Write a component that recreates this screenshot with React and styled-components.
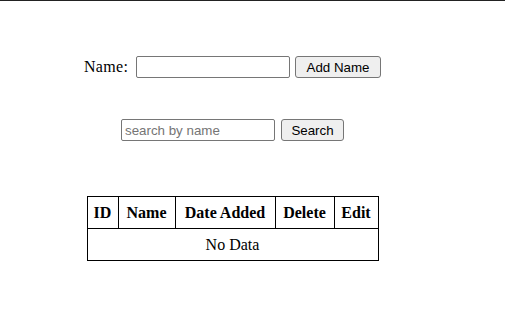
import styled, { createGlobalStyle } from "styled-components";

const GlobalStyle = createGlobalStyle`
  html, body {
    margin: 0;
    padding: 0;
    background: #fff;
  }
  body {
    border-top: 1px solid #222;
    font-family: "Liberation Serif", "Times New Roman", serif;
    font-size: 16px;
    color: #000;
  }
`;

const Page = styled.div`
  width: 465px;
  display: flex;
  flex-direction: column;
  align-items: center;
  padding-top: 55px;
`;

const Row = styled.div`
  display: flex;
  align-items: center;
  gap: ${(p) => p.$gap || 5}px;
  height: 22px;
  margin-bottom: ${(p) => p.$mb || 0}px;
`;

const Label = styled.label`
  width: 47px;
  font-size: 16px;
  line-height: 22px;
  letter-spacing: 0.3px;
`;

const Input = styled.input`
  box-sizing: border-box;
  width: ${(p) => p.$w || 154}px;
  height: 22px;
  padding: 1px 3px;
  border: 1px solid #767676;
  border-radius: 2px;
  font-family: "Liberation Sans", Arial, sans-serif;
  font-size: 13.33px;
  background: #fff;

  &::placeholder {
    color: #757575;
  }
`;

const Button = styled.button`
  box-sizing: border-box;
  height: 22px;
  width: ${(p) => p.$w}px;
  padding: 1px 6px;
  border: 1px solid #767676;
  border-radius: 3px;
  background: #efefef;
  font-family: "Liberation Sans", Arial, sans-serif;
  font-size: 13.33px;
  color: #000;
`;

const Table = styled.table`
  border-collapse: collapse;
  border: 1px solid #000;
  table-layout: fixed;
  width: 292px;
`;

const Th = styled.th`
  border: 1px solid #000;
  padding: 6px 0;
  font-weight: bold;
  font-size: 16px;
  line-height: 19px;
  white-space: nowrap;
`;

const Td = styled.td`
  border: 1px solid #000;
  padding: 6px 0;
  text-align: center;
  font-size: 16px;
  line-height: 19px;
`;

const columns = [
  { label: "ID", width: 31 },
  { label: "Name", width: 57 },
  { label: "Date Added", width: 100 },
  { label: "Delete", width: 59 },
  { label: "Edit", width: 44 },
];

export default function App() {
  return (
    <>
      <GlobalStyle />
      <Page>
        <Row $mb={41}>
          <Label>Name:</Label>
          <Input type="text" />
          <Button $w={86}>Add Name</Button>
        </Row>
        <Row $mb={55} $gap={6}>
          <Input type="text" placeholder="search by name" />
          <Button $w={63}>Search</Button>
        </Row>
        <Table>
          <colgroup>
            {columns.map((c) => (
              <col key={c.label} style={{ width: c.width }} />
            ))}
          </colgroup>
          <thead>
            <tr>
              {columns.map((c) => (
                <Th key={c.label}>{c.label}</Th>
              ))}
            </tr>
          </thead>
          <tbody>
            <tr>
              <Td colSpan={columns.length}>No Data</Td>
            </tr>
          </tbody>
        </Table>
      </Page>
    </>
  );
}
